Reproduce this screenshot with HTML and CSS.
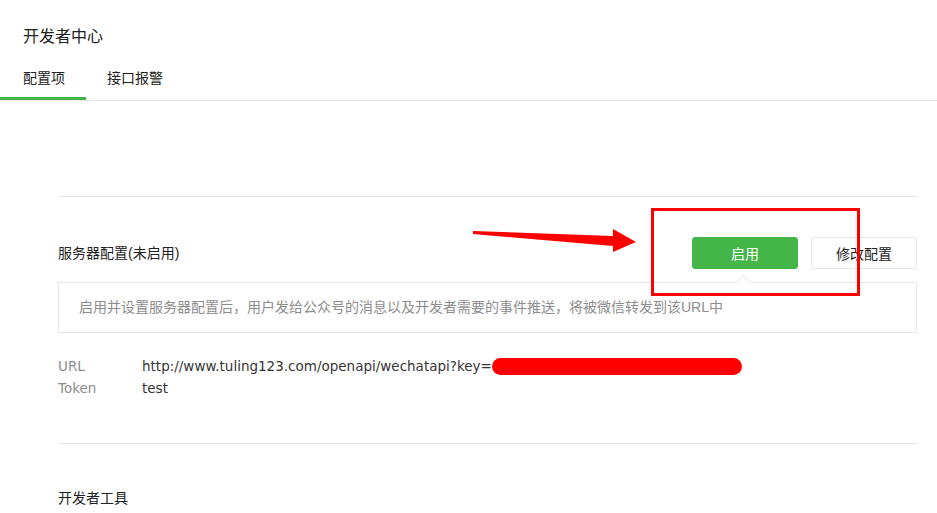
FILE: index.html
```html
<!DOCTYPE html>
<html lang="zh-CN">
  <head>
    <meta charset="UTF-8" />
    <title>开发者中心</title>
    <link rel="stylesheet" href="styles.css">
  </head>
  <body>
    <div class="page">
      <h1 class="page-title">开发者中心</h1>
      <div class="tabs">
        <a class="tab active">配置项</a>
        <a class="tab">接口报警</a>
      </div>

      <div class="main">
        <div class="section">
          <div class="section-head">
            <h3>服务器配置(未启用)</h3>
            <div class="actions">
              <button class="btn btn-green">启用</button>
              <button class="btn btn-default">修改配置</button>
            </div>
          </div>
          <div class="tips">
            启用并设置服务器配置后，用户发给公众号的消息以及开发者需要的事件推送，将被微信转发到该URL中
            <span class="notch"></span>
          </div>
          <div class="info">
            <div class="info-row">
              <label>URL</label>
              <span>http://www.tuling123.com/openapi/wechatapi?key=<i class="blot"></i></span>
            </div>
            <div class="info-row">
              <label>Token</label>
              <span>test</span>
            </div>
          </div>
        </div>

        <div class="section">
          <h3>开发者工具</h3>
        </div>
      </div>

      <!-- annotation drawn on the screenshot -->
      <svg class="mark" width="937" height="513" viewBox="0 0 937 513">
        <polygon points="473,231 613,236 613,229 636,242 613,252 613,246 473,234" fill="#ff0000" />
        <rect x="652.5" y="209.5" width="206" height="85" fill="none" stroke="#ff0000" stroke-width="3" />
      </svg>
    </div>
  </body>
</html>
```

FILE: styles.css
```css
body {
  margin: 0;
  font-family: "Liberation Sans", "Noto Sans CJK SC", sans-serif;
  font-size: 14px;
  color: #353535;
  background-color: #ffffff;
}
.page {
  position: relative;
  width: 937px;
  height: 513px;
  overflow: hidden;
}
.page-title {
  margin: 0;
  padding: 25px 23px 0;
  font-size: 16px;
  font-weight: normal;
  line-height: 24px;
  color: #222;
}
.tabs {
  display: flex;
  margin-top: 9px;
  border-bottom: 1px solid #e7e7eb;
  height: 42px;
}
.tab {
  padding: 0 21px;
  line-height: 40px;
  color: #222;
  border-bottom: 3px solid transparent;
}
.tab:first-child {
  padding-left: 23px;
}
.tab.active {
  border-bottom-color: #44b549;
}
.main {
  padding: 0 20px 0 58px;
}
.section {
  margin-top: 95px;
  border-top: 1px solid #e7e7eb;
  padding-top: 40px;
}
.section + .section {
  margin-top: 44px;
  padding-top: 38px;
}
.section h3 {
  margin: 0;
  font-size: 14px;
  font-weight: normal;
  line-height: 32px;
  color: #222;
}
.section-head {
  display: flex;
  justify-content: space-between;
  align-items: center;
}
.actions {
  display: flex;
  gap: 13px;
}
.btn {
  width: 106px;
  height: 32px;
  border-radius: 3px;
  font-family: inherit;
  font-size: 14px;
  cursor: pointer;
}
.btn-green {
  background-color: #44b549;
  border: 1px solid #44b549;
  color: #ffffff;
}
.btn-default {
  background-color: #ffffff;
  border: 1px solid #e7e7eb;
  color: #222;
}
.tips {
  position: relative;
  margin-top: 13px;
  border: 1px solid #e7e7eb;
  padding: 0 20px;
  line-height: 49px;
  color: #8d8d8d;
}
.notch {
  position: absolute;
  top: -6px;
  right: 167px;
  width: 10px;
  height: 10px;
  background-color: #ffffff;
  border-top: 1px solid #e7e7eb;
  border-left: 1px solid #e7e7eb;
  transform: rotate(45deg);
}
.info {
  margin-top: 22px;
  font-family: "DejaVu Sans", "Noto Sans CJK SC", sans-serif;
  font-size: 13.5px;
}
.info-row {
  display: flex;
  line-height: 22px;
}
.info-row label {
  width: 84px;
  color: #8d8d8d;
}
.blot {
  display: inline-block;
  width: 250px;
  height: 17px;
  border-radius: 9px;
  background-color: #ff0000;
  vertical-align: -4px;
}
.mark {
  position: absolute;
  top: 0;
  left: 0;
  pointer-events: none;
}
```
